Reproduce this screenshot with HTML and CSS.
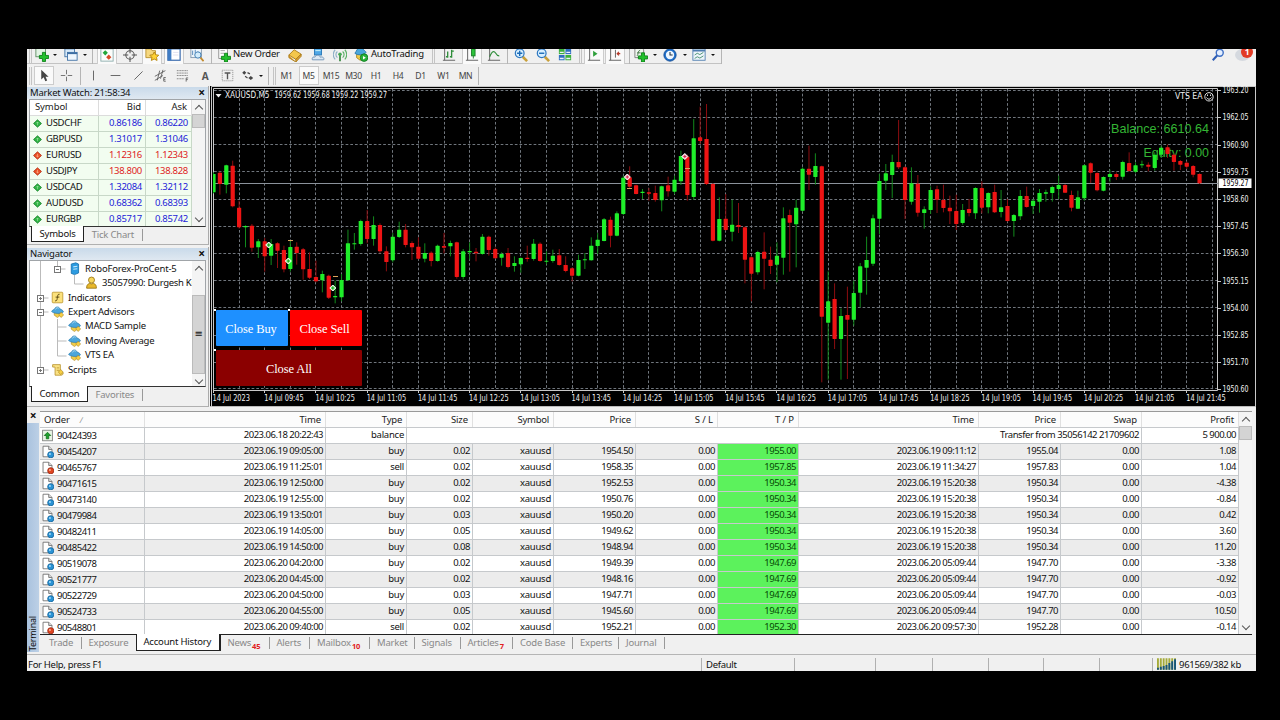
FILE: index.html
```
<!DOCTYPE html>
<html lang="en">
<head>
    <meta charset="UTF-8">
    <meta name="viewport" content="width=device-width, initial-scale=1.0">
    <title>Terminal</title>
    <link rel="stylesheet" href="styles.css">
</head>
<body>
    <svg class="sprite">
        <symbol id="page" viewBox="0 0 16 16"><path d="M2.500 1.500h7l4 4v9h-11z" fill="#fff" stroke="#666"/><path d="M9.500 1.500v4h4" fill="#ddd" stroke="#666"/></symbol>
        <symbol id="buy" viewBox="0 0 16 16"><use href="#page"/><circle cx="12" cy="12" r="3.800" fill="#2a93d5" stroke="#14659c"/><circle cx="11" cy="11" r="1.200" fill="#a9dcf7"/></symbol>
        <symbol id="sell" viewBox="0 0 16 16"><use href="#page"/><circle cx="12" cy="12" r="3.800" fill="#e0451f" stroke="#9c2814"/><circle cx="11" cy="11" r="1.200" fill="#f7b49c"/></symbol>
        <symbol id="balance" viewBox="0 0 16 16"><rect x="2" y="1.500" width="12" height="13" fill="#e9f5e4" stroke="#777"/><path d="M8 4l4 4h-2.500v4h-3V8H4z" fill="#1ea42c" stroke="#11701b"/></symbol>
        <symbol id="up" viewBox="0 0 16 16"><path d="M1 8l7-6.500L15 8l-7 6.500z" fill="#2fb444" stroke="#16812a" stroke-width="1.500"/><path d="M8 11V5.500M5.800 7.500L8 5.300l2.200 2.200" fill="none" stroke="#a9eaa9"/></symbol>
        <symbol id="down" viewBox="0 0 16 16"><path d="M1 8l7-6.500L15 8l-7 6.500z" fill="#ea5128" stroke="#b32c10" stroke-width="1.500"/><path d="M8 5v5.500M5.800 8.500L8 10.700l2.200-2.200" fill="none" stroke="#ffc9a0"/></symbol>
        <symbol id="ea" viewBox="0 0 16 16"><path d="M4 9.500h8V12l-4 3.500-4-3z" fill="#f0cc4a" stroke="#a7801b" stroke-width=".7"/><path d="M.700 8C2 5.500 4.500 5.500 4.500 5 5 1.500 10.500 1.500 11 5c1.500.3 4 1.500 4.300 3.500C12 11.500 3 10.500.7 8z" fill="#4ba6dc" stroke="#2878ad" stroke-width=".8"/><path d="M5.500 5.500c1-2.500 3-2.500 4-1.500" stroke="#b8e2f7" fill="none"/><path d="M12.500 9l3 3.200-3 3.200-3-3.200z" fill="#f7cf45" stroke="#a7801b" stroke-width=".7"/></symbol>
        <symbol id="server" viewBox="0 0 16 16"><path d="M4 2.500L9.500 1 13 2.500v11L8 15.500 4 14z" fill="#2c9be0" stroke="#1670ad"/><path d="M6.500 6l5-.800M6.500 9l5-.800" stroke="#bfe6fb" stroke-width="1.300"/></symbol>
        <symbol id="person" viewBox="0 0 16 16"><path d="M2 15c0-5 2-5 4-6 2 1 2 1 4 0 2 1 4 1 4 6z" fill="#e8b82c" stroke="#94700f"/><circle cx="8" cy="5" r="3.700" fill="#f6d65c" stroke="#94700f"/></symbol>
        <symbol id="func" viewBox="0 0 16 16"><rect x="1.500" y="1.500" width="13" height="13" rx="1" fill="#fbe17c" stroke="#bc962c"/><path d="M10.500 4C8 3.500 8.300 6 7.700 9c-.3 2.500-1 3.700-2.700 3M5.700 7.500h4.600" fill="none" stroke="#5c4a12" stroke-width="1.200"/></symbol>
        <symbol id="scroll" viewBox="0 0 16 16"><path d="M2 2h9.500v10H15c0 2-1 3-2.500 3H5V5H2z" fill="#fae285" stroke="#b8912b"/><path d="M7 6h3M7 9h3" stroke="#b8912b"/><path d="M12 8l3 3.200-3 3.200-3-3.200z" fill="#f7cf45" stroke="#a7801b" stroke-width=".7"/></symbol>
        <symbol id="chart-new" viewBox="0 0 16 16"><rect x="1" y="0" width="11" height="10" fill="#e2f3e4" stroke="#5b8a60"/><path d="M8.500 5h3.500v3.500h3.500V12H12v3.500H8.500V12H5V8.500h3.500z" fill="#22c02c" stroke="#0a7f16"/></symbol>
        <symbol id="windows" viewBox="0 0 16 16"><rect x="1" y="1" width="11" height="9" fill="#d8e9f8" stroke="#3c6ea3"/><rect x="4" y="5" width="11" height="9" fill="#eef6fd" stroke="#3c6ea3"/><path d="M4 6h11" stroke="#3c6ea3" stroke-width="2"/></symbol>
        <symbol id="quotes" viewBox="0 0 16 16"><rect x="1" y="1" width="14" height="14" fill="#fbfdfb" stroke="#8aa"/><path d="M6 2.500l3 3-3 3-3-3z" fill="#23a83a"/><path d="M10 7.500l3 3-3 3-3-3z" fill="#d84a26"/></symbol>
        <symbol id="target" viewBox="0 0 16 16"><circle cx="8" cy="8" r="4.800" fill="none" stroke="#555" stroke-width="1.200"/><path d="M8 0v6M8 10v6M0 8h6M10 8h6" stroke="#555" stroke-width="1.200"/></symbol>
        <symbol id="favs" viewBox="0 0 16 16"><path d="M1 1h6l1 2h4v8H1z" fill="#f6d880" stroke="#b78f2b"/><path d="M10.500 4.500l1.700 3.200 3.500.5-2.500 2.500.6 3.500-3.300-1.600-3.200 1.600.6-3.500-2.500-2.500 3.500-.5z" fill="#ffd234" stroke="#b1820e"/></symbol>
        <symbol id="panel" viewBox="0 0 16 16"><rect x="1" y="1" width="14" height="13" fill="#fff" stroke="#3f6fb0" stroke-width="1.400"/><path d="M1 1h4v13H1z" fill="#3f7cc4"/><path d="M7 5h6M7 8h6" stroke="#dde"/></symbol>
        <symbol id="tester" viewBox="0 0 16 16"><rect x="1" y="0" width="12" height="11" fill="#eef5fb" stroke="#7c93aa"/><path d="M3 3v5M6 2v4M9 4v4" stroke="#4b80b8"/><circle cx="9" cy="8" r="3.600" fill="#d3ecfb" stroke="#3675ad"/><path d="M12 11l3.500 4" stroke="#c38a2c" stroke-width="2"/></symbol>
        <symbol id="order" viewBox="0 0 16 16"><path d="M2 0h8l2 2v10H2z" fill="#fff" stroke="#888"/><path d="M4 3h5M4 6h4" stroke="#999"/><path d="M8.500 6H12v3.500h3.500V13H12v3H8.500v-3H5V9.500h3.500z" fill="#22c02c" stroke="#0a7f16"/></symbol>
        <symbol id="book" viewBox="0 0 16 16"><path d="M1 8l6-6 8 5-6 6z" fill="#f4c74c" stroke="#a87916"/><path d="M1 8v3l8 5v-3l6-6v2.500L9 16" fill="#e09f2c" stroke="#a87916"/></symbol>
        <symbol id="cloud" viewBox="0 0 16 16"><rect x="4" y="0" width="8" height="8" fill="#4fa7e6" stroke="#2374b4"/><path d="M5 3h6" stroke="#dff"/><path d="M1.500 13.500c-1-3 2-4 3-3 1-3 5.500-3 6 0 3-1 5 1 4 3z" fill="#dce8f3" stroke="#6b8fb3"/></symbol>
        <symbol id="signal" viewBox="0 0 16 16"><path d="M8 8v7" stroke="#3d8a45" stroke-width="2"/><path d="M5 11a4.500 4.500 0 0 1 0-7M2.500 13a8 8 0 0 1 0-11" fill="none" stroke="#8fb0c8" stroke-width="1.300"/><path d="M11 11a4.500 4.500 0 0 0 0-7M13.500 13a8 8 0 0 0 0-11" fill="none" stroke="#5bb267" stroke-width="1.300"/><circle cx="8" cy="7" r="2" fill="#47a955"/></symbol>
        <symbol id="auto" viewBox="0 0 16 16"><path d="M3 7h9v4l-5 3-4-3z" fill="#f2cc4a" stroke="#a7801b"/><path d="M1 6c2-2 2-6 6-6s5 4 7 5c-3 3.500-10 3.500-13 1z" fill="#4ba6dc" stroke="#2878ad"/><circle cx="11.500" cy="11" r="4.300" fill="#29b23a" stroke="#0d7a1d"/><path d="M10.300 9v4l3.200-2z" fill="#fff"/></symbol>
        <symbol id="bars" viewBox="0 0 16 16"><path d="M3 0v14M1 14h14" stroke="#555" fill="none"/><path d="M6.500 4v7M6.500 10h-2M11 2v9M11 3.500h2.500M11 10H9" stroke="#2f8d3a" stroke-width="1.500"/></symbol>
        <symbol id="candle" viewBox="0 0 16 16"><path d="M3 0v14M1 14h14" stroke="#555" fill="none"/><path d="M9.500 0v12" stroke="#187a25"/><rect x="7.500" y="1" width="4" height="8" fill="#2cc23a" stroke="#187a25"/></symbol>
        <symbol id="line" viewBox="0 0 16 16"><path d="M3 0v14M1 14h14" stroke="#555" fill="none"/><path d="M3 10c3-7 5-7 7-4 1 2 3 3 4 3" stroke="#2f8d3a" fill="none" stroke-width="1.300"/></symbol>
        <symbol id="zoom-in" viewBox="0 0 16 16"><path d="M10 10l5 5" stroke="#c9a03a" stroke-width="3"/><circle cx="6.500" cy="6" r="5" fill="#d7efff" stroke="#2f78c0" stroke-width="1.400"/><path d="M3.500 6h6M6.500 3v6" stroke="#1c6bb8" stroke-width="1.600"/></symbol>
        <symbol id="zoom-out" viewBox="0 0 16 16"><path d="M10 10l5 5" stroke="#c9a03a" stroke-width="3"/><circle cx="6.500" cy="6" r="5" fill="#d7efff" stroke="#2f78c0" stroke-width="1.400"/><path d="M3.500 6h6" stroke="#1c6bb8" stroke-width="1.600"/></symbol>
        <symbol id="tiles" viewBox="0 0 16 16"><rect x="1" y="1" width="6.500" height="6" fill="#3caf3c"/><rect x="8.500" y="1" width="6.500" height="6" fill="#2f6fc0"/><rect x="1" y="8" width="6.500" height="6" fill="#2f6fc0"/><rect x="8.500" y="8" width="6.500" height="6" fill="#3caf3c"/><path d="M2 5h4.500M9.500 5H14M2 12h4.500M9.500 12H14" stroke="#eef" stroke-width="1.500"/></symbol>
        <symbol id="autoscroll" viewBox="0 0 16 16"><path d="M3 0v14M1 14h14" stroke="#555" fill="none"/><path d="M7 3v7l5-3.500z" fill="#2fa03c"/></symbol>
        <symbol id="shift" viewBox="0 0 16 16"><path d="M3 0v14M1 14h14M8.500 2v9" stroke="#555" fill="none"/><path d="M14 6.500h-3M12.500 4.500l-2 2 2 2" stroke="#b53a2a" fill="none" stroke-width="1.400"/></symbol>
        <symbol id="indicator" viewBox="0 0 16 16"><path d="M1 0h8l2 2v9H1z" fill="#eff5ee" stroke="#777"/><path d="M3.500 9C5 8 4 3 7 2.500M3.500 5.500h4" stroke="#3b6f3f" fill="none"/><path d="M8.500 5.500H12V9h3.500v3.500H12V16H8.500v-3.500H5V9h3.500z" fill="#22c02c" stroke="#0a7f16"/></symbol>
        <symbol id="clock" viewBox="0 0 16 16"><circle cx="8" cy="8" r="7" fill="#1f6fca" stroke="#114c93"/><circle cx="8" cy="8" r="4.800" fill="#eef7ff"/><path d="M8 4.500V8h3" stroke="#234" fill="none" stroke-width="1.200"/></symbol>
        <symbol id="template" viewBox="0 0 16 16"><rect x="1" y="1" width="14" height="13" fill="#edf4fa" stroke="#4e7db0"/><path d="M1 3h14" stroke="#4e7db0" stroke-width="2"/><path d="M3 8l3-2 3 1.500L13 5M3 12l3-2 3 1.500L13 9" stroke="#3e8a6a" fill="none"/></symbol>
        <symbol id="search" viewBox="0 0 16 16"><circle cx="10" cy="5.500" r="4" fill="#e4efff" stroke="#3e6fc4" stroke-width="1.600"/><path d="M7 8.500L2 14" stroke="#2d5cb4" stroke-width="2.400"/></symbol>
        <symbol id="cursor" viewBox="0 0 16 16"><path d="M4 1v12l3-3 2 5 2.300-1-2-4.500H13z" fill="#444"/></symbol>
        <symbol id="cross" viewBox="0 0 16 16"><path d="M8 1v5.500M8 9.500V15M1 8h5.500M9.500 8H15" stroke="#666" stroke-width="1.100"/></symbol>
        <symbol id="vline" viewBox="0 0 16 16"><path d="M8 2v12" stroke="#666" stroke-width="1.200"/></symbol>
        <symbol id="hline" viewBox="0 0 16 16"><path d="M2 8h12" stroke="#666" stroke-width="1.200"/></symbol>
        <symbol id="trend" viewBox="0 0 16 16"><path d="M3 13L13 3" stroke="#666" stroke-width="1.200"/></symbol>
        <symbol id="channel" viewBox="0 0 16 16"><path d="M1 9l13-7M1 14l10-6M4 14l3-12M8 12l3-11" stroke="#555" fill="none"/><path d="M14.500 10.500H12v4.500h2.500M12 12.700h2" stroke="#555" fill="none"/></symbol>
        <symbol id="fibo" viewBox="0 0 16 16"><path d="M1 2h14M1 5h14M1 8h14M1 12h9" stroke="#777" stroke-dasharray="1.500 .5"/><path d="M12.500 15.500v-4.500H15M12.500 13h2" stroke="#555" fill="none"/></symbol>
        <symbol id="label" viewBox="0 0 16 16"><rect x="1.500" y="1.500" width="13" height="13" fill="none" stroke="#888" stroke-dasharray="1.500 1"/><path d="M4.500 5h7M8 5v7.500" stroke="#555" stroke-width="1.700"/></symbol>
        <symbol id="shapes" viewBox="0 0 16 16"><path d="M4 2l2.500 2.500L4 7 1.500 4.500z" fill="#444"/><path d="M8 4.500l3 1.500M5 9l3 2" stroke="#444" stroke-width="1.500"/><path d="M12 8.500l3 2.500-3 2.500L9 11z" fill="#444"/></symbol>
        <symbol id="traffic" viewBox="0 0 20 12"><path d="M1 0v12M4 0v12M7 0v12M10 0v12M13 0v12M16 0v12M19 0v12" stroke="#a5ab3a" stroke-width="2"/><path d="M1 10v2M4 9v3M7 8v4M10 7v5M13 5v7M16 3v9M19 1v11" stroke="#17557a" stroke-width="2"/></symbol>
    </svg>

    <div class="window">
        <div class="toolbar toolbar--main">
            <i class="handle"></i>
            <svg class="icon"><use href="#chart-new"/></svg><i class="caret"></i>
            <svg class="icon"><use href="#windows"/></svg><i class="caret"></i>
            <i class="sep"></i>
            <span class="pressed"><svg class="icon"><use href="#quotes"/></svg></span>
            <svg class="icon"><use href="#target"/></svg>
            <span class="pressed"><svg class="icon"><use href="#favs"/></svg></span>
            <span class="pressed"><svg class="icon"><use href="#panel"/></svg></span>
            <svg class="icon"><use href="#tester"/></svg>
            <i class="sep"></i>
            <svg class="icon"><use href="#order"/></svg><span class="toolbar__text">New Order</span>
            <svg class="icon"><use href="#book"/></svg>
            <svg class="icon"><use href="#cloud"/></svg>
            <svg class="icon"><use href="#signal"/></svg>
            <svg class="icon"><use href="#auto"/></svg><span class="toolbar__text">AutoTrading</span>
            <i class="handle"></i>
            <svg class="icon"><use href="#bars"/></svg>
            <span class="pressed"><svg class="icon"><use href="#candle"/></svg></span>
            <svg class="icon"><use href="#line"/></svg>
            <i class="sep"></i>
            <svg class="icon"><use href="#zoom-in"/></svg>
            <svg class="icon"><use href="#zoom-out"/></svg>
            <svg class="icon"><use href="#tiles"/></svg>
            <i class="handle"></i>
            <span class="pressed"><svg class="icon"><use href="#autoscroll"/></svg></span>
            <span class="pressed"><svg class="icon"><use href="#shift"/></svg></span>
            <i class="sep"></i>
            <svg class="icon"><use href="#indicator"/></svg><i class="caret"></i>
            <svg class="icon"><use href="#clock"/></svg><i class="caret"></i>
            <svg class="icon"><use href="#template"/></svg><i class="caret"></i>
            <i class="sep"></i>
            <span></span>
            <svg class="icon"><use href="#search"/></svg>
            <span class="chat"><b class="chat__badge">1</b></span>
        </div>

        <div class="toolbar toolbar--draw">
            <i class="handle"></i>
            <span class="pressed"><svg class="icon"><use href="#cursor"/></svg></span>
            <svg class="icon"><use href="#cross"/></svg>
            <i class="sep"></i>
            <svg class="icon"><use href="#vline"/></svg>
            <svg class="icon"><use href="#hline"/></svg>
            <svg class="icon"><use href="#trend"/></svg>
            <svg class="icon"><use href="#channel"/></svg>
            <svg class="icon"><use href="#fibo"/></svg>
            <b class="letter">A</b>
            <svg class="icon"><use href="#label"/></svg>
            <svg class="icon"><use href="#shapes"/></svg><i class="caret"></i>
            <i class="sep"></i>
            <i class="handle"></i>
            <span class="period">M1</span>
            <span class="period pressed">M5</span>
            <span class="period">M15</span>
            <span class="period">M30</span>
            <span class="period">H1</span>
            <span class="period">H4</span>
            <span class="period">D1</span>
            <span class="period">W1</span>
            <span class="period">MN</span>
            <i class="sep"></i>
        </div>

        <div class="main">
            <div class="side">
                <div class="panel panel--watch">
                    <div class="panel__title">Market Watch: 21:58:34<span class="close">×</span></div>
                    <div class="panel__box">
                        <div class="watch">
                            <div class="watch__row watch__row--head"><span>Symbol</span><span>Bid</span><span>Ask</span></div>
                            <div class="watch__row"><span><svg><use href="#up"/></svg>USDCHF</span><span>0.86186</span><span>0.86220</span></div>
                            <div class="watch__row"><span><svg><use href="#up"/></svg>GBPUSD</span><span>1.31017</span><span>1.31046</span></div>
                            <div class="watch__row watch__row--down"><span><svg><use href="#down"/></svg>EURUSD</span><span>1.12316</span><span>1.12343</span></div>
                            <div class="watch__row watch__row--down"><span><svg><use href="#down"/></svg>USDJPY</span><span>138.800</span><span>138.828</span></div>
                            <div class="watch__row"><span><svg><use href="#up"/></svg>USDCAD</span><span>1.32084</span><span>1.32112</span></div>
                            <div class="watch__row"><span><svg><use href="#up"/></svg>AUDUSD</span><span>0.68362</span><span>0.68393</span></div>
                            <div class="watch__row"><span><svg><use href="#up"/></svg>EURGBP</span><span>0.85717</span><span>0.85742</span></div>
                        </div>
                        <div class="scroll"><i class="scroll__up"></i><i class="scroll__thumb"></i><i class="scroll__down"></i></div>
                    </div>
                    <div class="side-tabs"><span class="side-tabs__item side-tabs__item--active">Symbols</span><span class="side-tabs__item">Tick Chart</span></div>
                </div>
                <div class="panel panel--nav">
                    <div class="panel__title">Navigator<span class="close">×</span></div>
                    <div class="panel__box">
                        <div class="tree">
                            <svg class="tree__lines" viewBox="0 0 160 127">
                                <path d="M10.500 0v109h8M10.500 37h8M10.500 51h8M27.500 0v8h8M44.500 14v9h9M27.500 58v37h9M27.500 66h9M27.500 80h9"/>
                                <g class="tree__boxes"><rect x="24.500" y="5.500" width="6" height="6"/><rect x="7.500" y="34.500" width="6" height="6"/><rect x="7.500" y="48.500" width="6" height="6"/><rect x="7.500" y="106.500" width="6" height="6"/><path d="M26 8.500h3M9 37.500h3M10.500 36v3M9 51.500h3M9 109.500h3M10.500 108v3"/></g>
                            </svg>
                            <div class="tree__row tree__row--2"><svg><use href="#server"/></svg>RoboForex-ProCent-5</div>
                            <div class="tree__row tree__row--3"><svg><use href="#person"/></svg>35057990: Durgesh Kumar</div>
                            <div class="tree__row"><svg><use href="#func"/></svg>Indicators</div>
                            <div class="tree__row"><svg><use href="#ea"/></svg>Expert Advisors</div>
                            <div class="tree__row tree__row--2"><svg><use href="#ea"/></svg>MACD Sample</div>
                            <div class="tree__row tree__row--2"><svg><use href="#ea"/></svg>Moving Average</div>
                            <div class="tree__row tree__row--2"><svg><use href="#ea"/></svg>VTS EA</div>
                            <div class="tree__row"><svg><use href="#scroll"/></svg>Scripts</div>
                        </div>
                        <div class="scroll scroll--nav"><i class="scroll__up"></i><i class="scroll__thumb">≡</i><i class="scroll__down"></i></div>
                    </div>
                    <div class="side-tabs"><span class="side-tabs__item side-tabs__item--active">Common</span><span class="side-tabs__item">Favorites</span></div>
                </div>
            </div>

            <div class="chart">
                <svg class="chart__canvas" width="1046" height="321" viewBox="210 86 1046 321"></svg>
                <button class="trade trade--buy">Close Buy</button>
                <button class="trade trade--sell">Close Sell</button>
                <button class="trade trade--all">Close All</button>
            </div>
        </div>

        <div class="terminal">
            <div class="terminal__side"><span class="close">×</span><span class="terminal__name">Terminal</span></div>
            <div class="terminal__body">
                <div class="terminal__view">
                    <div class="history"></div>
                    <div class="scroll"><i class="scroll__up"></i><i class="scroll__thumb"></i><i class="scroll__down"></i></div>
                </div>
                <div class="tabs">
                    <span>Trade</span><span>Exposure</span><span class="tabs__active">Account History</span><span>News<sub>45</sub></span><span>Alerts</span><span>Mailbox<sub>10</sub></span><span>Market</span><span>Signals</span><span>Articles<sub>7</sub></span><span>Code Base</span><span>Experts</span><span>Journal</span>
                </div>
            </div>
        </div>

        <div class="status">
            <span>For Help, press F1</span><span>Default</span><span></span><span></span><span></span><span></span><span></span><span></span>
            <span class="status__traffic"><svg><use href="#traffic"/></svg>961569/382 kb</span>
        </div>
    </div>
    <script src="app.js"></script>
</body>
</html>
```
FILE: styles.css
```
:root {
    --face: #f0f0f0;
    --line: #c6c9cc;
    --green: #5cf25c;
}
* {
    box-sizing: border-box;
}
body {
    margin: 0;
    height: 720px;
    overflow: hidden;
    background: #000;
    color: #111;
    font-family: "Noto Sans", "Open Sans", sans-serif;
    font-size: 9.500px;
    letter-spacing: -.2px;
}
.sprite {
    display: none;
}
.window {
    display: flex;
    flex-direction: column;
    width: 1229px;
    height: 622px;
    margin: 49px 0 0 27px;
    overflow: hidden;
    background: var(--face);
}

/* toolbars */
.toolbar {
    display: grid;
    align-items: center;
    justify-items: center;
    overflow: hidden;
    flex: none;
}
.toolbar--main {
    height: 15px;
    grid-template-rows: 12px;
    grid-template-columns: 7px 16px 10px 22px 6px 8px 22px 23px 22px 22px 23px 7px 18px 50px 23px 23px 22px 20px 57px 11px 20px 25px 20px 7px 19px 25px 20px 10px 17px 25px 5px 18px 10px 20px 9px 19px 10px 6px 1fr 22px 27px;
    background: linear-gradient(#c3c3c3, #c3c3c3) left bottom / 694px 1px no-repeat;
}
.toolbar--draw {
    height: 22px;
    grid-template-rows: 23px;
    grid-template-columns: 7px 20px 24px 4px 22px 23px 22px 22px 23px 22px 22px 19px 8px 7px 4px 21px 23px 22px 23px 22px 22px 23px 23px 21px 4px;
}
.icon {
    display: block;
    width: 14px;
    height: 14px;
    flex: none;
}
.toolbar--draw .icon {
    width: 13px;
    height: 13px;
}
.toolbar__text {
    justify-self: start;
    margin-top: -2px;
    white-space: nowrap;
    line-height: 10px;
}
.sep,
.handle {
    width: 1px;
    height: 18px;
    background: #b5b5b5;
}
.handle {
    width: 3px;
    border: solid #c4c4c4;
    border-width: 0 1px;
    background: none;
}
.caret {
    border: solid transparent;
    border-width: 2.500px 2.500px 0;
    border-top-color: #111;
}
.pressed {
    display: flex;
    align-items: center;
    justify-content: center;
    width: 20px;
    height: 19px;
    border: 1px solid #ccc;
    background: #fafafa;
}
.letter {
    color: #555;
    font-size: 10px;
}
.period {
    color: #444;
    font-size: 8.600px;
    letter-spacing: -.3px;
}
.chat {
    width: 15px;
    height: 12px;
    border-radius: 50%;
    background: #d5d9df;
    display: flex;
    justify-content: flex-end;
}
.chat__badge {
    width: 12px;
    height: 12px;
    margin: -3px -3px 0 0;
    border-radius: 50%;
    background: #e23b25;
    color: #fff;
    font-size: 8.500px;
    line-height: 12px;
    text-align: center;
}

/* left side */
.main {
    display: flex;
    height: 321px;
    flex: none;
}
.side {
    width: 183px;
    background: var(--face);
}
.panel {
    display: flex;
    flex-direction: column;
    width: 182px;
    padding: 0 2px 0 2px;
    border-right: 1px solid #aaa;
    border-bottom: 1px solid #b0b0b0;
}
.panel--watch {
    height: 159px;
}
.panel--nav {
    height: 160px;
    margin-top: 2px;
}
.panel__title {
    display: flex;
    justify-content: space-between;
    height: 12px;
    margin: 1px -2px 0 -2px;
    padding: 0 3px;
    background: linear-gradient(#c9daea, #dfe8f1);
    line-height: 12px;
}
.close {
    font-size: 12px;
    font-weight: bold;
}
.panel__box {
    display: flex;
    flex: 1;
    min-height: 0;
    overflow: hidden;
    border: 1px solid #a0a4a8;
    border-bottom-color: #333;
    background: #fff;
}
.watch {
    flex: 1;
}
.watch__row {
    display: grid;
    grid-template-columns: 69px 47px 1fr;
    height: 16px;
    line-height: 14px;
    background: #f2fdf0;
    color: #2222d8;
    letter-spacing: -.3px;
}
.watch__row span {
    padding-right: 3px;
    border: solid #c8d8c8;
    border-width: 0 1px 1px 0;
    text-align: right;
}
.watch__row span:first-child {
    display: flex;
    align-items: center;
    gap: 4px;
    padding: 0 0 1px 3px;
    color: #111;
    text-align: left;
}
.watch__row svg {
    width: 9px;
    height: 9px;
}
.watch__row--head,
.watch__row--head span:first-child {
    background: #fff;
    color: #222;
    letter-spacing: -.1px;
}
.watch__row--head span {
    padding-right: 4px;
    border-color: #dcdcdc;
}
.watch__row--head span:first-child {
    padding-left: 5px;
}
.watch__row--down {
    color: #de2222;
}
.scroll {
    display: flex;
    flex-direction: column;
    width: 13px;
    flex: none;
    background: #f4f4f4;
}
.scroll i {
    display: block;
    flex: none;
    height: 14px;
}
.scroll__up::before,
.scroll__down::before {
    content: '';
    display: block;
    width: 5px;
    height: 5px;
    margin: 6px auto 0;
    border: solid #555;
    border-width: 1px 0 0 1px;
    transform: rotate(45deg);
}
.scroll__down {
    margin-top: auto;
}
.scroll__down::before {
    margin-top: 3px;
    transform: rotate(225deg);
}
.scroll .scroll__thumb {
    border: 1px solid #bbb;
    background: #d4d4d4;
}
.scroll--nav .scroll__thumb {
    height: 79px;
    margin-top: 20px;
    font: 10px/76px "DejaVu Sans", sans-serif;
    text-align: center;
}
.side-tabs {
    display: flex;
    height: 17px;
    padding-left: 2px;
    flex: none;
    color: #888;
}
.panel--nav .side-tabs {
    height: 19px;
}
.side-tabs__item {
    height: 12px;
    margin-top: 2px;
    padding: 0 7.500px;
    border-right: 1px solid #999;
    line-height: 11px;
}
.side-tabs__item--active {
    height: 16px;
    margin-top: -1px;
    border: solid #222;
    border-width: 0 1px 1px;
    background: #fff;
    color: #111;
    line-height: 16px;
}
.tree {
    position: relative;
    flex: 1;
    overflow: hidden;
}
.tree__lines {
    position: absolute;
    left: 0;
    top: 0;
    width: 160px;
    height: 127px;
    fill: none;
    stroke: #bbb;
}
.tree__boxes {
    fill: #fff;
    stroke: #777;
}
.tree__row {
    display: flex;
    align-items: center;
    gap: 4px;
    height: 14.450px;
    padding-left: 21px;
    white-space: nowrap;
}
.tree__row svg {
    width: 13px;
    height: 13px;
    flex: none;
}
.tree__row--2 {
    padding-left: 38px;
}
.tree__row--3 {
    padding-left: 55px;
    letter-spacing: -.3px;
}

/* chart */
.chart {
    position: relative;
    flex: 1;
    background: #000;
    border-bottom: 1px solid #bbb;
}
.chart__canvas {
    display: block;
    font-family: "DejaVu Sans", sans-serif;
    font-size: 8px;
    letter-spacing: 0;
    fill: #f0f0f0;
}
.chart__grid {
    stroke: #70767d;
    stroke-dasharray: 2.700 2;
}
.chart__frame {
    fill: none;
    stroke: #c8c8c8;
}
.chart__up {
    fill: #1fee2a;
    stroke: #128a1c;
}
.chart__down {
    fill: #ee1414;
    stroke: #8d0d10;
}
.chart__body {
    stroke: none;
}
.chart__info {
    fill: #34b534;
    font-family: "Liberation Sans", sans-serif;
    font-size: 13px;
}
.trade {
    position: absolute;
    left: 6px;
    top: 224px;
    width: 72px;
    height: 36px;
    padding: 2px 2px 0 0;
    border: 0;
    border-radius: 1px;
    color: #fff;
    font: 12.500px "Liberation Serif", serif;
    letter-spacing: -.1px;
}
.trade::before {
    content: '';
    position: absolute;
    left: -2px;
    top: -1px;
    width: 2px;
    height: 2px;
    background: #fff;
}
.trade--buy {
    background: #1e90ff;
}
.trade--sell {
    left: 79.500px;
    background: #f00;
}
.trade--all {
    top: 264px;
    width: 146px;
    padding-right: 0;
    background: #8b0000;
}

/* terminal */
.terminal {
    display: flex;
    height: 248px;
    padding-top: 4px;
    flex: none;
    border-bottom: 1px solid #b5b5b5;
}
.terminal__side {
    display: flex;
    flex-direction: column;
    justify-content: space-between;
    align-items: center;
    width: 12px;
    height: 241px;
    background: linear-gradient(90deg, #a9c2de, #bcd0e6);
}
.terminal__side .close {
    width: 12px;
    height: 12px;
    background: var(--face);
    line-height: 9px;
    text-align: center;
}
.terminal__name {
    margin-bottom: 1px;
    writing-mode: vertical-rl;
    transform: rotate(180deg);
    font-size: 9px;
    line-height: 12px;
}
.terminal__body {
    flex: 1;
    min-width: 0;
    padding: 0 4px 0 1px;
}
.terminal__view {
    display: flex;
    height: 224px;
    overflow: hidden;
    border: solid #999;
    border-width: 1px 0 1px;
    border-bottom-color: #222;
}
.history {
    flex: 1;
    min-width: 0;
}
.history__row {
    display: grid;
    grid-template-columns: 105px 181px 81px 66px 81px 82px 82px 81px 180px 82px 81px 1fr;
    height: 16px;
    border-bottom: 1px solid var(--line);
    background: #fff;
    letter-spacing: -.5px;
    line-height: 14px;
    white-space: nowrap;
}
.history__row:nth-child(odd) {
    background: #ececec;
}
.history__row.history__row--head {
    background: #fcfcfc;
    color: #222;
    letter-spacing: -.1px;
    line-height: 15px;
}
.history__row span {
    padding-right: 2px;
    border-right: 1px solid var(--line);
    text-align: right;
}
.history__row span:nth-child(3),
.history__row span:nth-child(5):not(:last-child) {
    letter-spacing: -.25px;
}
.history__row--head span {
    padding-right: 4px;
    border-color: #e0e0e0;
}
.history__row span:first-child {
    display: flex;
    align-items: center;
    gap: 3px;
    padding-left: 1px;
    text-align: left;
}
.history__row--head span:first-child {
    padding-left: 4px;
    gap: 10px;
}
.history__row i {
    color: #888;
    font-size: 8px;
}
.history__row svg {
    width: 13px;
    height: 13px;
}
.history__row .history__hit {
    background: var(--green);
    color: #064a06;
}
.history__row .history__note {
    grid-column: 4 / 12;
    letter-spacing: -.45px;
}
.tabs {
    display: grid;
    grid-template-columns: 41.500px 54px 85px 49px 40.500px 60px 44.500px 46px 52.500px 60px 46px 46px;
    height: 17px;
    color: #888;
    line-height: 16px;
    white-space: nowrap;
}
.tabs span {
    height: 12px;
    margin-top: 2px;
    padding-left: 7px;
    border-right: 1px solid #999;
    line-height: 11px;
}
.tabs span:first-child {
    padding-left: 9px;
}
.tabs span:nth-child(2) {
    border: 0;
}
.tabs .tabs__active {
    height: 17px;
    margin-top: -1px;
    border: solid #222;
    border-width: 0 2px 1px 1px;
    background: #fff;
    color: #111;
    line-height: 16px;
}
.tabs sub {
    margin-left: 1px;
    color: #e02020;
    font-size: 7.500px;
    font-weight: bold;
    line-height: 0;
    vertical-align: -2.500px;
}

/* status bar */
.status {
    display: grid;
    grid-template-columns: 673px 93px 81px 57px 56px 55px 56px 53px 1fr;
    height: 15px;
    padding: 1px 0 0 1px;
    letter-spacing: -.3px;
    line-height: 17px;
    white-space: nowrap;
}
.status > span + span {
    margin-top: 2px;
    padding-left: 4px;
    border-left: 1px solid #b0b0b0;
    line-height: 13px;
}
.status__traffic {
    display: flex;
    gap: 3px;
}
.status__traffic svg {
    width: 19px;
    height: 12px;
}
```
FILE: app.js
```
const canvas = document.querySelector('.chart__canvas');

// [up, high, body top, body bottom, low], three units per pixel from y = 84
const candles = [
    [1,265,270,325,328],[0,262,266,300,332],[1,242,244,302,328],[0,230,245,367,370],[0,350,371,430,434],
    [1,424,426,430,490],[0,420,425,491,503],[1,465,472,490,522],[0,462,472,517,563],[1,465,480,515,543],
    [0,475,478,500,552],[0,485,498,556,565],[1,470,489,555,563],[0,475,488,507,542],[0,492,496,556,587],
    [0,505,555,581,585],[0,530,579,592,595],[1,560,570,589,625],[0,572,575,641,645],[1,590,636,640,658],
    [1,570,588,640,652],[1,437,478,589,590],[1,447,478,481,497],[1,407,411,480,485],[0,378,411,465,478],
    [1,397,423,465,485],[0,418,423,502,508],[0,487,502,534,562],[1,447,458,529,535],[1,413,437,459,462],
    [0,420,437,483,490],[0,472,477,490,528],[0,460,488,524,526],[1,478,507,524,535],[0,502,506,531,547],
    [1,482,485,531,533],[0,447,486,491,508],[1,470,477,487,517],[0,473,475,579,584],[1,495,502,579,586],
    [1,475,501,505,527],[0,492,503,508,532],[1,450,458,510,512],[0,455,458,498,515],[0,490,495,523,524],
    [1,505,510,521,545],[0,492,507,549,553],[1,517,537,546,563],[1,520,522,541,566],[0,485,521,525,533],
    [1,465,479,525,530],[0,475,479,531,533],[1,502,530,533,541],[1,497,515,531,536],[0,495,514,543,545],
    [0,517,543,561,565],[0,550,553,575,592],[1,512,528,575,577],[1,507,526,529,555],[1,460,485,529,530],
    [1,447,467,486,510],[1,402,406,471,472],[0,398,407,455,490],[1,382,388,455,457],[1,275,281,390,393],
    [0,247,280,308,313],[0,302,304,330,331],[1,315,323,327,345],[0,312,325,329,350],[0,305,327,348,353],
    [1,305,307,349,382],[0,278,304,322,338],[1,275,287,323,330],[1,200,216,292,303],[0,212,218,333,350],
    [1,105,163,339,348],[0,68,160,171,180],[0,60,165,300,303],[0,297,300,470,472],[1,340,405,470,472],
    [0,330,404,438,440],[1,347,422,443,472],[0,357,423,429,447],[0,427,430,527,598],[0,517,520,569,652],
    [1,500,504,565,572],[0,445,503,524,616],[0,488,527,546,570],[1,475,515,542,595],[1,370,403,521,572],
    [0,377,393,416,563],[1,347,371,421,550],[1,250,254,380,382],[0,185,254,272,318],[1,208,246,279,302],
    [0,245,247,698,895],[1,562,652,716,887],[0,598,645,765,795],[1,673,696,765,887],[0,608,693,707,885],
    [1,590,627,707,725],[1,537,547,626,670],[1,458,528,551,632],[1,392,403,539,546],[1,270,291,404,450],
    [1,240,268,290,318],[1,212,234,273,342],[0,108,234,250,255],[0,247,250,348,405],[1,250,298,353,362],
    [0,273,299,386,398],[1,367,376,387,434],[1,307,318,378,390],[0,305,316,347,387],[0,302,348,372,385],
    [0,335,371,382,420],[0,332,381,420,438],[1,360,378,417,422],[0,345,375,387,397],[1,310,312,388,405],
    [0,292,312,371,388],[1,325,327,370,388],[0,302,324,385,387],[1,318,370,384,400],[0,345,366,411,413],
    [1,390,393,411,458],[1,318,336,397,408],[0,308,336,369,371],[1,345,350,366,390],[1,315,327,353,386],
    [1,317,325,329,353],[1,305,309,327,353],[1,275,303,315,345],[0,300,303,326,327],[0,320,333,371,382],
    [1,320,340,374,375],[1,242,244,343,350],[0,235,238,266,297],[0,265,267,319,322],[1,277,279,320,322],
    [1,257,270,279,295],[0,265,270,279,288],[1,230,234,278,287],[0,205,237,261,263],[1,235,244,263,267],
    [1,230,241,244,252],[0,235,242,248,262],[1,205,212,252,260],[1,185,191,212,222],[0,182,190,210,222],
    [0,208,212,234,260],[0,228,231,242,258],[0,232,236,248,255],[0,243,246,272,280],[0,268,270,298,300]
];
const xAt = (i) => 213.5 + 6.403 * i;
const yAt = (v) => 84 + v / 3;
const label = (x, y, width, text, color) =>
    `<text x="${x}" y="${y}" textLength="${width}" lengthAdjust="spacingAndGlyphs"${color ? ` fill="${color}"` : ''}>${text}</text>`;
const prices = ['1963.20', '1962.05', '1960.90', '1959.75', '1958.60', '1957.45', '1956.30', '1955.15', '1954.00', '1952.85', '1951.70', '1950.60'];

let out = '<g class="chart__grid">';
for (let i = 4; i <= 156; i += 4) {
    const x = Math.floor(xAt(i)) + 0.5;
    out += `<path d="M${x} 89V390"/>`;
}
prices.forEach((p, i) => {
    const y = Math.min(Math.round(89.8 + 27.19 * i), 388) + 0.5;
    out += `<path d="M214 ${y}H1218"/>`;
});
out += '</g>';
out += '<path class="chart__frame" d="M211.500 407V86.500H1255M213.500 390V88.500H1217.500V390.500H213.500M1255.500 86V407"/><path d="M214 183.500H1218" stroke="#8b929b"/>';
out += `<g class="chart__info">${label(1111, 133, 98, 'Balance: 6610.64')}${label(1143.5, 157.3, 65.5, 'Equity: 0.00')}</g>`;

candles.forEach(([up, high, top, bottom, low], i) => {
    const x = xAt(i);
    const left = Math.max(x - 2.1, 213);
    out += `<g class="chart__${up ? 'up' : 'down'}"><path d="M${x} ${yAt(high)}V${yAt(low)}"/>` +
        `<rect class="chart__body" x="${left}" y="${yAt(top)}" width="${x + 2.1 - left}" height="${(bottom - top) / 3}" rx=".4"/></g>`;
});

// trade markers
[[268.7, 245, '#9dfc9d'], [288.3, 261, '#9dfc9d'], [332.8, 288, '#9dfc9d'], [627.3, 177, '#ffc0cb'], [684.8, 156.5, '#ffc0cb']].forEach(([x, y, color]) => {
    out += `<path d="M${x} ${y - 3}l3 3-3 3-3-3z" fill="${color}" stroke="#fff"/>`;
    out += `<path d="M${x - 1.5} ${y}h3M${x} ${y - 1.5}v3" stroke="${color === '#9dfc9d' ? '#139c1d' : '#d02b50'}"/>`;
});
out += '<path d="M288 240.500h5M333 276.500h5M627 188.500h5M685 168.500h5" stroke="#d9a35c"/>';

prices.forEach((p, i) => {
    const y = Math.min(90.2 + 27.19 * i, 388.5);
    out += `<path d="M1218 ${Math.round(y)}.500h3" stroke="#c8c8c8"/>${label(1222.5, y + 3, 26, p)}`;
});
out += `<rect x="1218.500" y="178.500" width="33" height="9.500" fill="#fff"/>${label(1222.5, 186.2, 26, '1959.27', '#000')}`;

for (let k = 0; k < 20; k++) {
    const x = k ? xAt(8 * k) : 213;
    const minutes = 545 + 40 * k;
    const time = `${String(Math.floor(minutes / 60)).padStart(2, '0')}:${String(minutes % 60).padStart(2, '0')}`;
    out += `<path d="M${Math.floor(x) + 0.5} 390v3" stroke="#c8c8c8"/>${label(x - 0.5, 400.8, k ? 39.5 : 37.5, `14 Jul ${k ? time : '2023'}`)}`;
}

out += `<path d="M215.500 94h6l-3 3.500z"/>${label(225, 98.3, 44.5, 'XAUUSD,M5')}${label(274.5, 98.3, 112.5, '1959.62 1959.68 1959.22 1959.27')}`;
out += `${label(1175, 99, 27.5, 'VTS EA')}<circle cx="1209" cy="96.800" r="4.200" fill="none" stroke="#ddd"/><path d="M1206.500 97.500q2.500 3.500 5 0M1207.500 94.500v1.500M1210.500 94.500v1.500" fill="none" stroke="#ddd"/>`;
canvas.innerHTML = out;

const orders = [
    ['90454207', '19 09:05:00', 'buy', '0.02', '1954.50', '1955.00', '19 09:11:12', '1955.04', '1.08'],
    ['90465767', '19 11:25:01', 'sell', '0.02', '1958.35', '1957.85', '19 11:34:27', '1957.83', '1.04'],
    ['90471615', '19 12:50:00', 'buy', '0.02', '1952.53', '1950.34', '19 15:20:38', '1950.34', '-4.38'],
    ['90473140', '19 12:55:00', 'buy', '0.02', '1950.76', '1950.34', '19 15:20:38', '1950.34', '-0.84'],
    ['90479984', '19 13:50:01', 'buy', '0.03', '1950.20', '1950.34', '19 15:20:38', '1950.34', '0.42'],
    ['90482411', '19 14:05:00', 'buy', '0.05', '1949.62', '1950.34', '19 15:20:38', '1950.34', '3.60'],
    ['90485422', '19 14:50:00', 'buy', '0.08', '1948.94', '1950.34', '19 15:20:38', '1950.34', '11.20'],
    ['90519078', '20 04:20:00', 'buy', '0.02', '1949.39', '1947.69', '20 05:09:44', '1947.70', '-3.38'],
    ['90521777', '20 04:45:00', 'buy', '0.02', '1948.16', '1947.69', '20 05:09:44', '1947.70', '-0.92'],
    ['90522729', '20 04:50:00', 'buy', '0.03', '1947.71', '1947.69', '20 05:09:44', '1947.70', '-0.03'],
    ['90524733', '20 04:55:00', 'buy', '0.05', '1945.60', '1947.69', '20 05:09:44', '1947.70', '10.50'],
    ['90548801', '20 09:40:00', 'sell', '0.02', '1952.21', '1952.30', '20 09:57:30', '1952.28', '-0.14']
];
const cells = (list) => list.map((text) => `<span>${text}</span>`).join('');

document.querySelector('.history').innerHTML =
    `<div class="history__row history__row--head">${cells(['Order<i>∕</i>', 'Time', 'Type', 'Size', 'Symbol', 'Price', 'S / L', 'T / P', 'Time', 'Price', 'Swap', 'Profit'])}</div>` +
    `<div class="history__row">${cells(['<svg><use href="#balance"/></svg>90424393', '2023.06.18 20:22:43', 'balance'])}<span class="history__note">Transfer from 35056142 21709602</span><span>5 900.00</span></div>` +
    orders.map(([id, opened, type, size, price, tp, closed, exit, profit]) =>
        `<div class="history__row">${cells([`<svg><use href="#${type}"/></svg>${id}`, `2023.06.${opened}`, type, size, 'xauusd', price, '0.00'])}` +
        `<span class="history__hit">${tp}</span>${cells([`2023.06.${closed}`, exit, '0.00', profit])}</div>`).join('');
```
